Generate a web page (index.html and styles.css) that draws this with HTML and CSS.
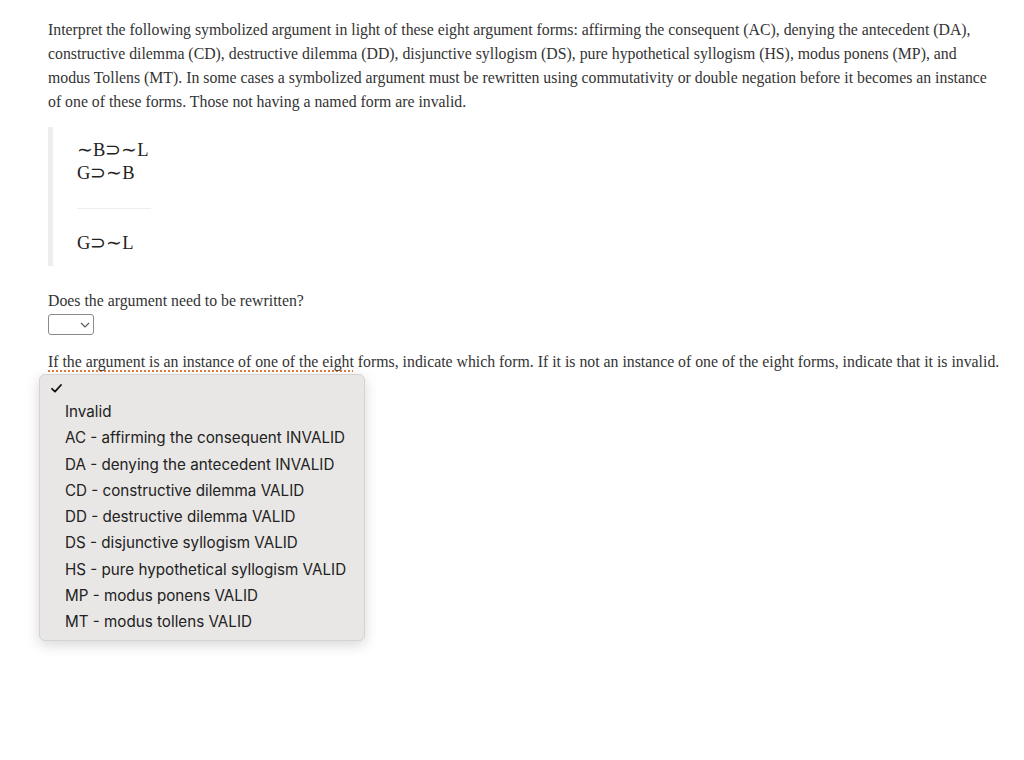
FILE: index.html
```html
<!DOCTYPE html>
<html>
<head>
<meta charset="utf-8">
<link rel="stylesheet" href="styles.css">
</head>
<body>
<div class="page">
  <p class="intro">Interpret the following symbolized argument in light of these eight argument forms: affirming the consequent (AC), denying the antecedent (DA), constructive dilemma (CD), destructive dilemma (DD), disjunctive syllogism (DS), pure hypothetical syllogism (HS), modus ponens (MP), and modus Tollens (MT). In some cases a symbolized argument must be rewritten using commutativity or double negation before it becomes an instance of one of these forms. Those not having a named form are invalid.</p>
  <div class="argument">
    <div class="premise">∼B⊃∼L</div>
    <div class="premise">G⊃∼B</div>
    <div class="rule"></div>
    <div class="conclusion">G⊃∼L</div>
  </div>
  <p class="question">Does the argument need to be rewritten?</p>
  <div class="select">
    <svg width="10" height="6" viewBox="0 0 10 6"><path d="M1 1 L5 5 L9 1" fill="none" stroke="#555" stroke-width="1.1"/></svg>
  </div>
  <div class="second">
    <p class="question2"><span class="dotted">If the argument is an instance of one of the eight</span> forms, indicate which form. If it is not an instance of one of the eight forms, indicate that it is invalid.</p>
    <div class="menu">
      <div class="check"><svg width="11" height="9" viewBox="0 0 11 9"><path d="M1 4.8 L4 7.6 L10 1" fill="none" stroke="#111" stroke-width="1.8" stroke-linecap="round" stroke-linejoin="round"/></svg></div>
      <div class="item">Invalid</div>
      <div class="item">AC - affirming the consequent INVALID</div>
      <div class="item">DA - denying the antecedent INVALID</div>
      <div class="item">CD - constructive dilemma VALID</div>
      <div class="item">DD - destructive dilemma VALID</div>
      <div class="item">DS - disjunctive syllogism VALID</div>
      <div class="item">HS - pure hypothetical syllogism VALID</div>
      <div class="item">MP - modus ponens VALID</div>
      <div class="item">MT - modus tollens VALID</div>
    </div>
  </div>
</div>
</body>
</html>
```
FILE: styles.css
```css
html, body {
  margin: 0;
  padding: 0;
  background: #fff;
}
.page {
  min-height: 760px;
  box-sizing: border-box;
  padding: 18px 24px 0 48px;
  font-family: "Liberation Serif", "Times New Roman", serif;
  font-size: 15.8px;
  color: #333;
}
.intro {
  margin: 0;
  line-height: 24px;
}
.argument {
  margin-top: 13px;
  border-left: 5px solid #eee;
  padding: 12px 0 11px 24px;
  font-family: "Liberation Serif", serif;
  font-size: 18.5px;
  color: #222;
  line-height: 23px;
}
.rule {
  width: 74px;
  height: 1px;
  background: #eee;
  margin: 23px 0 23px 0;
}
.question {
  margin: 23px 0 0 0;
  line-height: 24px;
}
.select {
  margin-top: 1px;
  width: 44px;
  height: 19px;
  border: 1px solid #8a8a8a;
  border-radius: 3px;
  display: flex;
  align-items: center;
  justify-content: flex-end;
  box-sizing: content-box;
}
.select svg {
  margin-right: 3px;
}
.second {
  position: relative;
  margin-top: 15px;
}
.question2 {
  margin: 0;
  line-height: 24px;
}
.dotted {
  text-decoration: underline dotted #e07b39;
  text-decoration-thickness: 2px;
  text-underline-offset: 3px;
  text-decoration-skip-ink: none;
}
.menu {
  position: absolute;
  left: -9px;
  top: 24px;
  width: 324px;
  padding: 3px 0 4px 0;
  background: #e8e7e5;
  border: 1px solid #d4d3d1;
  border-radius: 6px;
  box-shadow: 0 4px 14px rgba(0,0,0,0.16);
  font-family: "Inter", "Liberation Sans", Arial, sans-serif;
  font-size: 15.2px;
  color: #222;
}
.check {
  padding-left: 11px;
  height: 21px;
  display: flex;
  align-items: center;
}
.item {
  padding-left: 25px;
  height: 26.3px;
  line-height: 26px;
}
```
